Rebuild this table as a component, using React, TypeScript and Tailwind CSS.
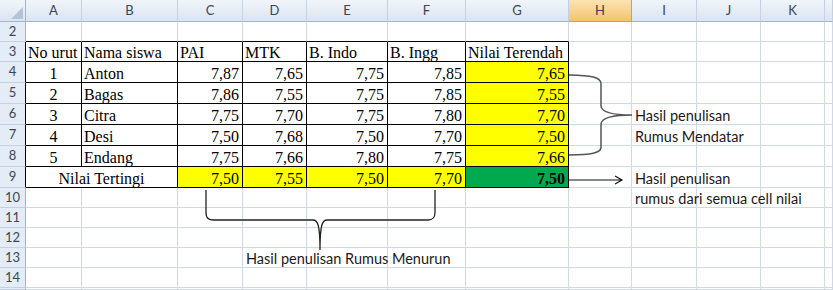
import React from "react"

type Cell = {
  t: string
  a?: "l" | "c" | "r"
  bg?: "y" | "g"
  b?: boolean
  note?: boolean
  span?: number
}

const COLS = ["A", "B", "C", "D", "E", "F", "G", "H", "I", "J", "K", ""]
const ROWS = [2, 3, 4, 5, 6, 7, 8, 9, 10, 11, 12, 13, 14, 15]

const students = [
  ["1", "Anton", "7,87", "7,65", "7,75", "7,85", "7,65"],
  ["2", "Bagas", "7,86", "7,55", "7,75", "7,85", "7,55"],
  ["3", "Citra", "7,75", "7,70", "7,75", "7,80", "7,70"],
  ["4", "Desi", "7,50", "7,68", "7,50", "7,70", "7,50"],
  ["5", "Endang", "7,75", "7,66", "7,80", "7,75", "7,66"],
]

// sheet content, keyed by row then column index (1 = A)
const sheet: Record<number, Record<number, Cell>> = {
  3: Object.fromEntries(
    ["No urut", "Nama siswa", "PAI", "MTK", "B. Indo", "B. Ingg", "Nilai Terendah"].map((t, i) => [i + 1, { t, a: "l" }])
  ),
  9: {
    1: { t: "Nilai Tertingi", a: "c", span: 2 },
    3: { t: "7,50", a: "r", bg: "y" },
    4: { t: "7,55", a: "r", bg: "y" },
    5: { t: "7,50", a: "r", bg: "y" },
    6: { t: "7,70", a: "r", bg: "y" },
    7: { t: "7,50", a: "r", bg: "g", b: true },
    9: { t: "Hasil penulisan", note: true },
  },
  6: { 9: { t: "Hasil penulisan", note: true } },
  7: { 9: { t: "Rumus Mendatar", note: true } },
  10: { 9: { t: "rumus dari semua cell nilai", note: true } },
  13: { 4: { t: "Hasil penulisan Rumus Menurun", note: true } },
}

students.forEach((s, i) => {
  const r = 4 + i
  const row: Record<number, Cell> = { ...(sheet[r] || {}) }
  s.forEach((t, c) => {
    row[c + 1] = { t, a: c === 0 ? "c" : c === 1 ? "l" : "r", bg: c === 6 ? "y" : undefined }
  })
  sheet[r] = row
})

function ColHeader({ label, active }: { label: string; active: boolean }) {
  return (
    <div
      className={
        active
          ? "flex items-center justify-center border-r border-b border-r-[#c9a35a] border-b-[#c9a35a] bg-gradient-to-b from-[#fbe3b2] to-[#f3c46c] font-['Lato',sans-serif] text-[13px] text-[#3f3f3f]"
          : "flex items-center justify-center border-r border-b border-r-[#c5d1de] border-b-[#9eb6ce] bg-gradient-to-b from-[#f1f5fb] to-[#dbe4ef] font-['Lato',sans-serif] text-[13px] text-[#3a4656]"
      }
    >
      {label}
    </div>
  )
}

function RowHeader({ n }: { n: number }) {
  const dark = n >= 3 && n <= 9
  return (
    <div
      className={
        dark
          ? "flex items-center justify-center border-r border-b border-r-black border-b-[#c5d1de] bg-[#e4ecf7] font-['Lato',sans-serif] text-[13px] text-[#3a4656]"
          : "flex items-center justify-center border-r border-b border-r-[#9eb6ce] border-b-[#c5d1de] bg-[#e4ecf7] font-['Lato',sans-serif] text-[13px] text-[#3a4656]"
      }
    >
      {/* row 15 only peeks in at the bottom edge */}
      {n < 15 ? n : null}
    </div>
  )
}

function SheetCell({ r, c }: { r: number; c: number }) {
  const cell = sheet[r]?.[c]
  const inTable = r >= 3 && r <= 9 && c >= 1 && c <= 7
  const right = inTable ? "border-r-black" : "border-r-[#d0d7e5]"
  const bottom = inTable || (r === 2 && c >= 1 && c <= 7) ? "border-b-black" : "border-b-[#d0d7e5]"
  const bg = cell?.bg === "y" ? "bg-[#ffff00]" : cell?.bg === "g" ? "bg-[#00a84e]" : ""
  const span = cell?.span === 2 ? "col-span-2" : ""
  const align =
    cell?.a === "c" ? "justify-center" : cell?.a === "r" ? "justify-end pr-[3px]" : cell?.note ? "pl-[3px]" : "pl-[2px]"
  const font = cell?.note
    ? "relative z-10 font-['Lato',sans-serif] text-[14.5px] text-[#1a1a1a]"
    : "font-['Liberation_Serif',serif] text-[16px] text-black"

  return (
    <div className={`flex items-end whitespace-nowrap border-r border-b leading-4 ${right} ${bottom} ${bg} ${span} ${align} ${font} ${cell?.b ? "font-bold" : ""}`}>
      {cell?.t}
    </div>
  )
}

function Annotations() {
  return (
    <svg className="pointer-events-none absolute inset-0 z-20" width="833" height="290" viewBox="0 0 833 290" fill="none">
      {/* right brace: Rumus Mendatar */}
      <path
        d="M569 75 C592 75.5 600 77 601 83 L601 106 C601.5 112 610 115 632 115 C610 115 601.5 118 601 124 L601 148 C600 153 592 154.5 569 155"
        stroke="#555"
        strokeWidth="1.5"
      />
      {/* arrow to overall min */}
      <path d="M569 180 L622 180 M615 176 L622 180 L615 184" stroke="#111" strokeWidth="1.2" />
      {/* bottom brace: Rumus Menurun */}
      <path
        d="M206 190 L206 212 C206 218 208 220 214 220 L313 220 C317.5 220 320 224 320 250 C320 224 322.5 220 327 220 L428 220 C433 220 435 218 435 212 L435 190"
        stroke="#222"
        strokeWidth="1.3"
      />
    </svg>
  )
}

export default function App() {
  return (
    <div className="relative h-[290px] w-[833px] overflow-hidden bg-white">
      <div className="grid grid-cols-[26px_56px_96px_65px_64px_81px_78px_103px_63px_65px_64px_64px_8px] grid-rows-[22px_20px_20px_21px_21px_21px_21px_21px_21px_20px_20px_20px_20px_20px_2px]">
        {/* top-left corner */}
        <div className="relative border-r border-b border-r-[#9eb6ce] border-b-[#9eb6ce] bg-gradient-to-b from-[#f1f5fb] to-[#dbe4ef]">
          <svg className="absolute right-[2px] bottom-[2px]" width="12" height="12" viewBox="0 0 12 12">
            <polygon points="12,0 12,12 0,12" fill="#b4c4d8" />
          </svg>
        </div>
        {COLS.map((l, i) => (
          <ColHeader key={i} label={l} active={l === "H"} />
        ))}

        {ROWS.map((r) => (
          <React.Fragment key={r}>
            <RowHeader n={r} />
            {COLS.map((_, i) => {
              const c = i + 1
              if (r === 9 && c === 2) return null
              return <SheetCell key={c} r={r} c={c} />
            })}
          </React.Fragment>
        ))}
      </div>
      <Annotations />
    </div>
  )
}
